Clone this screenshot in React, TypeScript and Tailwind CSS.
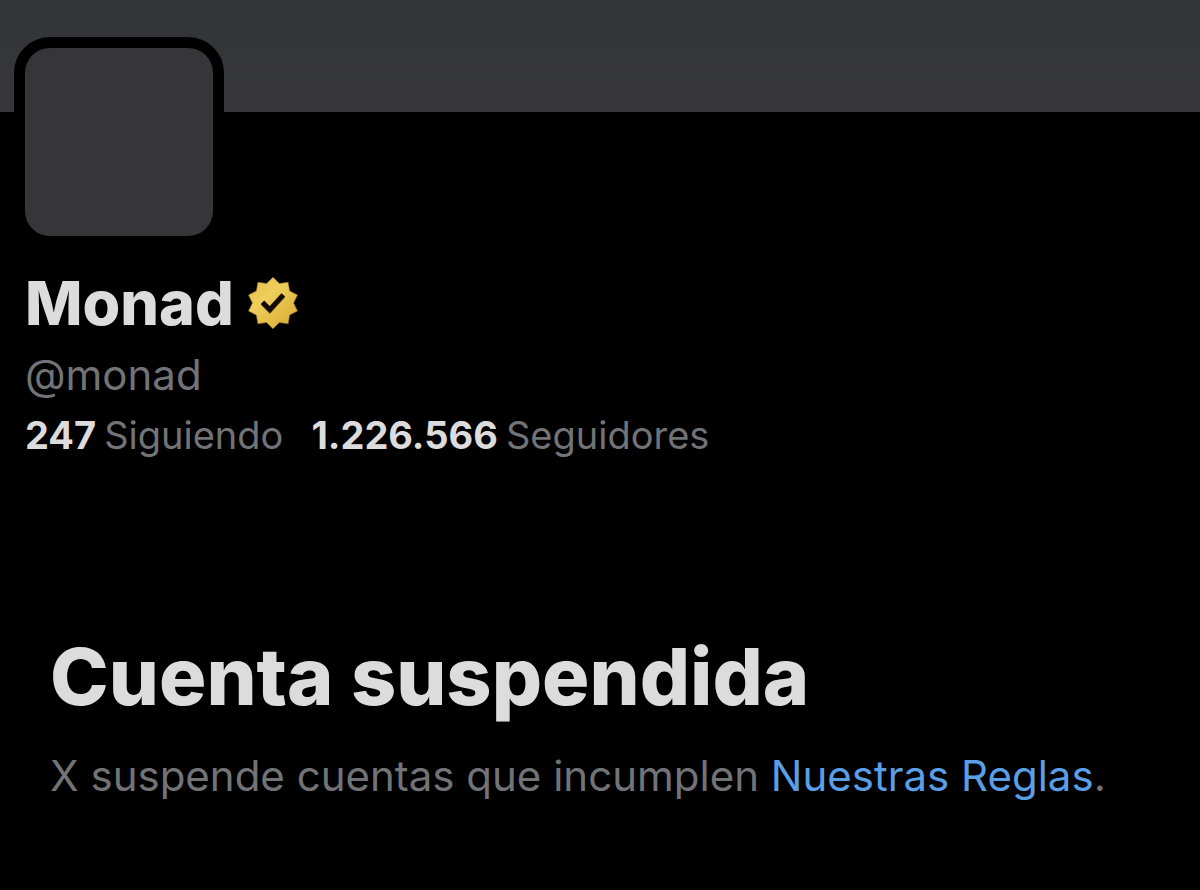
interface StatProps {
  href: string;
  value: string;
  label: string;
}

function Stat({ href, value, label }: StatProps) {
  return (
    <a href={href} className="flex gap-2 text-[#717376]">
      <span className="font-bold text-[#dcdcdc]">{value}</span>
      <span>{label}</span>
    </a>
  );
}

function GoldBadge() {
  return (
    <svg viewBox="0 0 22 22" className="size-[54px]" role="img" aria-label="Cuenta verificada">
      <defs>
        <linearGradient id="gold" x1="3" y1="2" x2="19" y2="20" gradientUnits="userSpaceOnUse">
          <stop offset="0" stopColor="#e6c14c" />
          <stop offset="0.35" stopColor="#efce5c" />
          <stop offset="0.65" stopColor="#e5bf48" />
          <stop offset="1" stopColor="#dcae3c" />
        </linearGradient>
      </defs>
      <path
        fill="url(#gold)"
        stroke="#8a6a2a"
        strokeWidth="0.25"
        d="M13.596 3.011L11 .5 8.404 3.011l-3.576-.506-.624 3.558-3.19 1.692L2.6 11l-1.586 3.245 3.19 1.692.624 3.558 3.576-.506L11 21.5l2.596-2.511 3.576.506.624-3.558 3.19-1.692L19.4 11l1.586-3.245-3.19-1.692-.624-3.558-3.576.506z"
      />
      <path fill="#9c7420" d="M6 11.75l3.74 3.74 6.2-6.77-1.2-1-5.07 4.87-2.26-2.26z" />
      <path fill="#120c04" d="M6 11.39l3.74 3.74 6.2-6.77L14.47 7l-4.8 5.23-2.26-2.26L6 11.39z" />
    </svg>
  );
}

export default function App() {
  return (
    <main className="min-h-screen bg-black font-['Inter',sans-serif]">
      <div className="h-28 bg-linear-to-b from-[#333438] to-[#37373a]" />

      <header className="px-[14px]">
        {/* Avatar overlaps the banner */}
        <div className="-mt-[75px] size-[210px] rounded-[36px] border-[11px] border-black bg-[#363639]" />

        <div className="px-[11px]">
          <div className="mt-6 flex items-center gap-3">
            <h1 className="text-[61px] leading-[64px] font-extrabold text-[#dcdcdc]">Monad</h1>
            <GoldBadge />
          </div>
          <p className="mt-[10px] text-[42px] leading-[60px] text-[#717376]">@monad</p>
          <div className="flex flex-wrap gap-x-7 text-[38px] leading-[60px]">
            <Stat href="#siguiendo" value="247" label="Siguiendo" />
            <Stat href="#seguidores" value="1.226.566" label="Seguidores" />
          </div>
        </div>
      </header>

      <section className="mt-[163px] px-[50px]">
        <h2 className="text-[79px] leading-[96px] font-extrabold text-[#dcdcdc]">Cuenta suspendida</h2>
        <p className="mt-[22px] text-[42px] leading-[60px] text-[#717376]">
          X suspende cuentas que incumplen{" "}
          <a href="#reglas" className="text-[#5a9ee6]">
            Nuestras Reglas
          </a>
          .
        </p>
      </section>
    </main>
  );
}
